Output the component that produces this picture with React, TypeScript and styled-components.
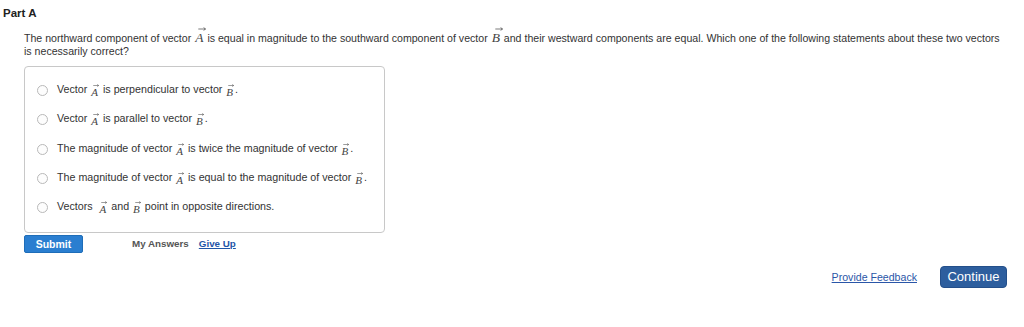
import React from 'react';
import styled, { createGlobalStyle } from 'styled-components';

const GlobalStyle = createGlobalStyle`
  html, body {
    margin: 0;
    padding: 0;
    background: #ffffff;
  }
  body {
    font-family: "Liberation Sans", Arial, sans-serif;
    color: #333333;
  }
`;

const options = [
  ['Vector ', 'A', ' is perpendicular to vector ', 'B', '.'],
  ['Vector ', 'A', ' is parallel to vector ', 'B', '.'],
  ['The magnitude of vector ', 'A', ' is twice the magnitude of vector ', 'B', '.'],
  ['The magnitude of vector ', 'A', ' is equal to the magnitude of vector ', 'B', '.'],
  ['Vectors  ', 'A', ' and ', 'B', ' point in opposite directions.'],
];

const Vec: React.FC<{ letter: string; small?: boolean }> = ({ letter, small }) => (
  <VecWrap $small={small}>
    <Arrow $small={small} viewBox="0 0 8 4" aria-hidden="true">
      <path d="M0.3 2 H7.4 M5.6 0.6 L7.6 2 L5.6 3.4" fill="none" stroke="#444" strokeWidth="0.7" />
    </Arrow>
    {letter}
  </VecWrap>
);

const App: React.FC = () => {
  return (
    <Page>
      <GlobalStyle />
      <PartTitle>Part A</PartTitle>
      <Content>
        <Question>
          <span>
            The northward component of vector <Vec letter="A" /> is equal in magnitude to the southward
            component of vector <Vec letter="B" /> and their westward components are equal. Which one of
            the following statements about these two vectors
          </span>
          <br />
          <span>is necessarily correct?</span>
        </Question>
        <Choices>
          {options.map((o, i) => (
            <Choice key={i}>
              <Radio />
              <ChoiceText>
                {o[0]}
                <Vec letter={o[1]} small />
                {o[2]}
                <Vec letter={o[3]} small />
                {o[4]}
              </ChoiceText>
            </Choice>
          ))}
        </Choices>
        <Actions>
          <SubmitButton>Submit</SubmitButton>
          <MyAnswers>My Answers</MyAnswers>
          <GiveUp>Give Up</GiveUp>
        </Actions>
      </Content>
      <Footer>
        <Feedback>Provide Feedback</Feedback>
        <ContinueButton>Continue</ContinueButton>
      </Footer>
    </Page>
  );
};

export default App;

const Page = styled.div`
  width: 1024px;
  height: 327px;
  padding-top: 6px;
  box-sizing: border-box;
`;

const PartTitle = styled.div`
  padding-left: 3px;
  font-size: 11.5px;
  font-weight: bold;
  color: #222222;
  line-height: 14px;
`;

const Content = styled.div`
  padding-left: 24px;
  padding-top: 11px;
`;

const Question = styled.div`
  width: 990px;
  font-size: 10.6px;
  line-height: 12px;
  color: #333333;
  white-space: nowrap;
`;

const VecWrap = styled.span<{ $small?: boolean }>`
  position: relative;
  display: inline-block;
  font-family: "Liberation Serif", "Times New Roman", serif;
  font-style: italic;
  font-size: ${(p) => (p.$small ? '11px' : '13.5px')};
  line-height: 1;
  color: #444444;
  vertical-align: ${(p) => (p.$small ? '-3px' : '0')};
  padding: ${(p) => (p.$small ? '0 2px 0 1px' : '0 1px')};
`;

const Arrow = styled.svg<{ $small?: boolean }>`
  position: absolute;
  left: ${(p) => (p.$small ? '2.5px' : '4px')};
  top: ${(p) => (p.$small ? '-3px' : '-4px')};
  width: ${(p) => (p.$small ? '6px' : '8px')};
  height: ${(p) => (p.$small ? '3px' : '4px')};
`;

const Choices = styled.div`
  margin-top: 9px;
  width: 361px;
  height: 167px;
  box-sizing: border-box;
  border: 1px solid #c8c8c8;
  border-radius: 4px;
  padding: 16px 0 0 12px;
  display: flex;
  flex-direction: column;
  gap: 13px;
`;

const Choice = styled.div`
  display: flex;
  align-items: center;
  height: 16.3px;
`;

const Radio = styled.span`
  width: 11px;
  height: 11px;
  box-sizing: border-box;
  border: 1px solid #b9b9b9;
  border-radius: 50%;
  background: #fdfdfd;
  margin-right: 9px;
  flex-shrink: 0;
`;

const ChoiceText = styled.span`
  font-size: 10.7px;
  color: #333333;
  white-space: pre;
`;

const Actions = styled.div`
  display: flex;
  align-items: center;
  margin-top: 2px;
`;

const SubmitButton = styled.button`
  width: 59px;
  height: 18px;
  padding: 0;
  border: 1px solid #1e6db8;
  border-radius: 2px;
  background: #2a7ed0;
  color: #ffffff;
  font-family: "Liberation Sans", Arial, sans-serif;
  font-weight: bold;
  font-size: 10.5px;
`;

const MyAnswers = styled.span`
  margin-left: 49px;
  font-size: 9.8px;
  font-weight: bold;
  color: #555555;
`;

const GiveUp = styled.a`
  margin-left: 10px;
  font-size: 9.8px;
  font-weight: bold;
  color: #1f56a8;
  text-decoration: underline;
`;

const Footer = styled.div`
  display: flex;
  justify-content: flex-end;
  align-items: center;
  padding-right: 17px;
  margin-top: 13px;
`;

const Feedback = styled.a`
  font-size: 10.6px;
  color: #2a56a8;
  text-decoration: underline;
  margin-right: 23px;
`;

const ContinueButton = styled.button`
  width: 67px;
  height: 22px;
  padding: 0;
  border: 1px solid #244f8a;
  border-radius: 4px;
  background: #2d5e9e;
  color: #ffffff;
  font-family: "Liberation Sans", Arial, sans-serif;
  font-size: 13px;
`;
